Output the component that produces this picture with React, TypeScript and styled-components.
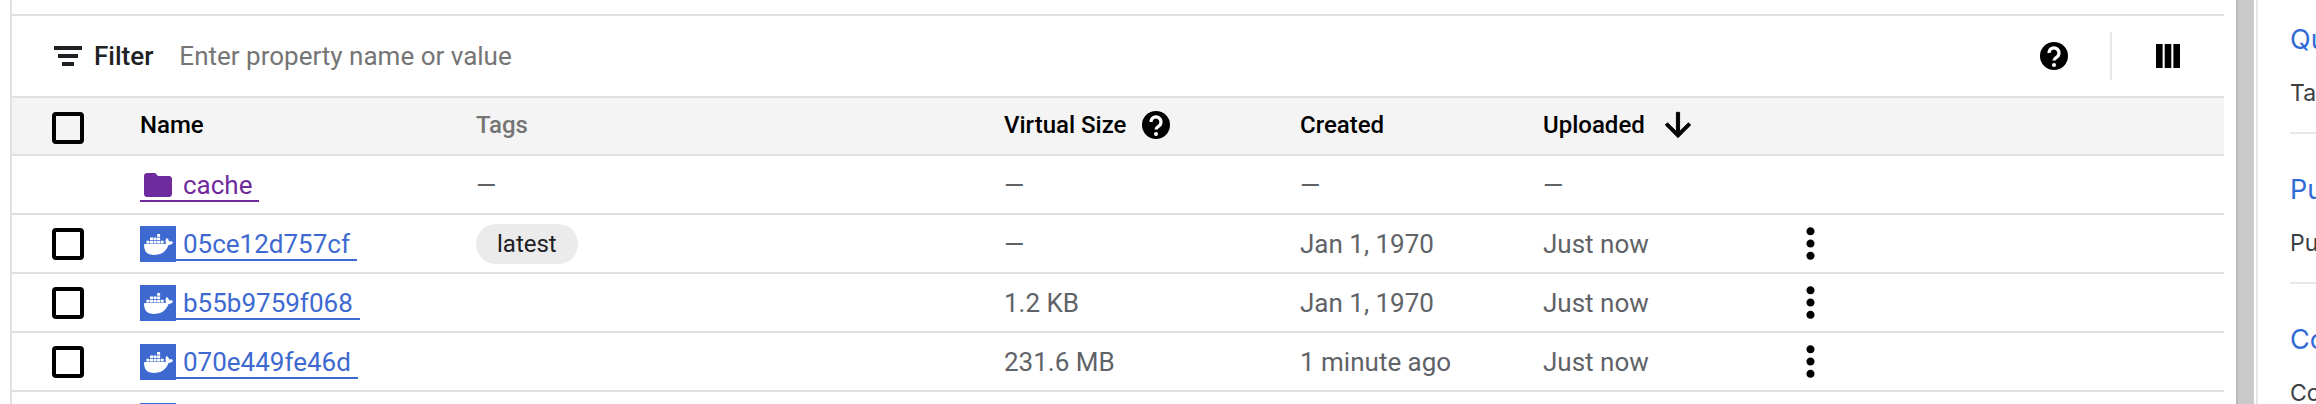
import styled, { createGlobalStyle } from 'styled-components';
import { SiDocker } from 'react-icons/si';

const GlobalStyle = createGlobalStyle`
  html, body {
    margin: 0;
    height: 404px;
    overflow: hidden;
    background: #fff;
  }
  * {
    box-sizing: border-box;
  }
`;

const Page = styled.div`
  display: flex;
  width: 2316px;
  height: 404px;
  overflow: hidden;
  font-family: Roboto, "Liberation Sans", sans-serif;
  font-size: 26px;
  line-height: 36px;
  color: #5f6368;
`;

const Main = styled.div`
  flex: none;
  width: 2214px;
  margin-left: 10px;
  padding-top: 14px;
  border-left: 2px solid #e0e0e0;
`;

const Scrollbar = styled.div`
  flex: none;
  width: 18px;
  margin-left: 12px;
  background: #c9c9c9;
  border-left: 2px solid #b9b9b9;
`;

const Panel = styled.aside`
  flex: none;
  width: 60px;
  margin-left: 2px;
  padding: 22px 0 0 32px;
  border-left: 2px solid #e6e6e6;
  overflow: hidden;
  font-family: Inter, Roboto, sans-serif;
`;

const PanelSection = styled.div`
  width: 200px;
  padding-bottom: 23px;
  margin-bottom: 38px;
  border-bottom: 2px solid #e8e8e8;
`;

const PanelTitle = styled.div`
  font-size: 27px;
  line-height: 36px;
  color: #2f6bd6;
  margin-bottom: 19px;
`;

const PanelText = styled.div`
  font-size: 23px;
  line-height: 32px;
  color: #3c4043;
`;

const Toolbar = styled.div`
  display: flex;
  align-items: center;
  height: 82px;
  padding: 0 44px 0 42px;
  border-top: 2px solid #e0e0e0;
`;

const FilterLabel = styled.span`
  margin-left: 12px;
  font-weight: 500;
  color: #202124;
`;

const FilterHint = styled.span`
  flex: 1;
  margin-left: 26px;
  color: #757575;
`;

const ToolbarDivider = styled.div`
  width: 2px;
  height: 48px;
  margin: 0 44px 0 42px;
  background: #e8e8e8;
`;

const Row = styled.div<{ $head?: boolean }>`
  display: grid;
  grid-template-columns: 128px 336px 528px 296px 243px 243px 49px;
  align-items: center;
  height: ${(p) => (p.$head ? '58px' : '59px')};
  border-top: 2px solid #e0e0e0;
  background: ${(p) => (p.$head ? '#f4f4f4' : '#fff')};
`;

const CheckCell = styled.div<{ $head?: boolean }>`
  display: flex;
  padding-left: 40px;
  margin-top: ${(p) => (p.$head ? '4px' : '0')};
`;

const Checkbox = styled.span`
  width: 32px;
  height: 32px;
  border: 4px solid #000;
  border-radius: 4px;
`;

const HeadCell = styled.div<{ $muted?: boolean }>`
  display: flex;
  align-items: center;
  margin-bottom: 2px;
  font-size: 24px;
  font-weight: 500;
  color: ${(p) => (p.$muted ? '#757575' : '#000')};
`;

const HeadIcon = styled.svg`
  flex: none;
  margin-left: 14px;
  fill: #000;
`;

const NameLink = styled.a<{ $folder?: boolean }>`
  display: inline-flex;
  align-items: flex-start;
  justify-self: start;
  height: 35px;
  border-bottom: 2px solid ${(p) => (p.$folder ? '#6f2b9d' : '#3d69d0')};
  color: ${(p) => (p.$folder ? '#6f2b9d' : '#3d69d0')};
`;

const IconBox = styled.span<{ $folder?: boolean }>`
  flex: none;
  display: flex;
  align-items: center;
  justify-content: center;
  width: 36px;
  height: 36px;
  color: #fff;
  background: ${(p) => (p.$folder ? 'transparent' : '#3d69d0')};
`;

const NameText = styled.span`
  margin: 0 7px;
`;

const Chip = styled.span`
  justify-self: start;
  height: 40px;
  padding: 0 21px;
  border-radius: 20px;
  background: #ebebeb;
  font-size: 24px;
  line-height: 40px;
  color: #202124;
`;

const MoreIcon = styled.svg`
  display: block;
  fill: #000;
`;

const HelpIcon = () => (
  <svg width="28" height="28" viewBox="0 0 28 28">
    <circle cx="14" cy="14" r="14" fill="#000" />
    <path
      d="M9 11a5 5 0 1 1 7.9 4c-1.9 1.3-2.9 1.8-2.9 3.6"
      fill="none"
      stroke="#fff"
      strokeWidth="3.2"
    />
    <circle cx="14" cy="23" r="2" fill="#fff" />
  </svg>
);

const HelpSlot = styled.span`
  display: flex;
  flex: none;
  margin-left: 16px;
`;

const FolderIcon = () => (
  <svg width="28" height="24" viewBox="2 4 20 16" preserveAspectRatio="none" fill="#6f2b9d">
    <path d="M10 4H4c-1.1 0-1.99.9-1.99 2L2 18c0 1.1.9 2 2 2h16c1.1 0 2-.9 2-2V8c0-1.1-.9-2-2-2h-8l-2-2z" />
  </svg>
);

type Item = {
  name: string;
  folder?: boolean;
  tag?: string;
  size: string;
  created: string;
  uploaded: string;
};

const items: Item[] = [
  { name: 'cache', folder: true, size: '—', created: '—', uploaded: '—' },
  { name: '05ce12d757cf', tag: 'latest', size: '—', created: 'Jan 1, 1970', uploaded: 'Just now' },
  { name: 'b55b9759f068', size: '1.2 KB', created: 'Jan 1, 1970', uploaded: 'Just now' },
  { name: '070e449fe46d', size: '231.6 MB', created: '1 minute ago', uploaded: 'Just now' },
  { name: '', size: '', created: '', uploaded: '' },
];

const panelItems = [
  ['Qu', 'Ta'],
  ['Pu', 'Pu'],
  ['Co', 'Co'],
];

export default function App() {
  return (
    <Page>
      <GlobalStyle />
      <Main>
        <Toolbar>
          <svg width="28" height="20" viewBox="0 0 28 20" fill="#202124">
            <rect x="0" y="0" width="28" height="4" />
            <rect x="4" y="8" width="20" height="4" />
            <rect x="8" y="16" width="12" height="4" />
          </svg>
          <FilterLabel>Filter</FilterLabel>
          <FilterHint>Enter property name or value</FilterHint>
          <HelpIcon />
          <ToolbarDivider />
          <svg width="24" height="24" viewBox="0 0 24 24" fill="#000">
            <rect x="0" y="0" width="6.6" height="24" />
            <rect x="8.7" y="0" width="6.6" height="24" />
            <rect x="17.4" y="0" width="6.6" height="24" />
          </svg>
        </Toolbar>
        <Row $head>
          <CheckCell $head>
            <Checkbox />
          </CheckCell>
          <HeadCell>Name</HeadCell>
          <HeadCell $muted>Tags</HeadCell>
          <HeadCell>
            Virtual Size
            <HelpSlot>
              <HelpIcon />
            </HelpSlot>
          </HeadCell>
          <HeadCell>Created</HeadCell>
          <HeadCell>
            Uploaded
            <HeadIcon width="38" height="38" viewBox="0 0 24 24">
              <path
                d="M20 12l-1.41-1.41L13 16.17V4h-2v12.17l-5.58-5.59L4 12l8 8 8-8z"
                stroke="#000"
                strokeWidth="0.6"
              />
            </HeadIcon>
          </HeadCell>
        </Row>
        {items.map((item, i) => (
          <Row key={i}>
            <CheckCell>{!item.folder && <Checkbox />}</CheckCell>
            <NameLink $folder={item.folder}>
              <IconBox $folder={item.folder}>
                {item.folder ? <FolderIcon /> : <SiDocker size={29} />}
              </IconBox>
              {item.name && <NameText>{item.name}</NameText>}
            </NameLink>
            {item.tag ? <Chip>{item.tag}</Chip> : <div>{item.folder ? '—' : ''}</div>}
            <div>{item.size}</div>
            <div>{item.created}</div>
            <div>{item.uploaded}</div>
            {!item.folder && item.name && (
              <MoreIcon width="49" height="49" viewBox="0 0 24 24">
                <path d="M12 8c1.1 0 2-.9 2-2s-.9-2-2-2-2 .9-2 2 .9 2 2 2zm0 2c-1.1 0-2 .9-2 2s.9 2 2 2 2-.9 2-2-.9-2-2-2zm0 6c-1.1 0-2 .9-2 2s.9 2 2 2 2-.9 2-2-.9-2-2-2z" />
              </MoreIcon>
            )}
          </Row>
        ))}
      </Main>
      <Scrollbar />
      <Panel>
        {panelItems.map(([title, text]) => (
          <PanelSection key={title + text}>
            <PanelTitle>{title}</PanelTitle>
            <PanelText>{text}</PanelText>
          </PanelSection>
        ))}
      </Panel>
    </Page>
  );
}
